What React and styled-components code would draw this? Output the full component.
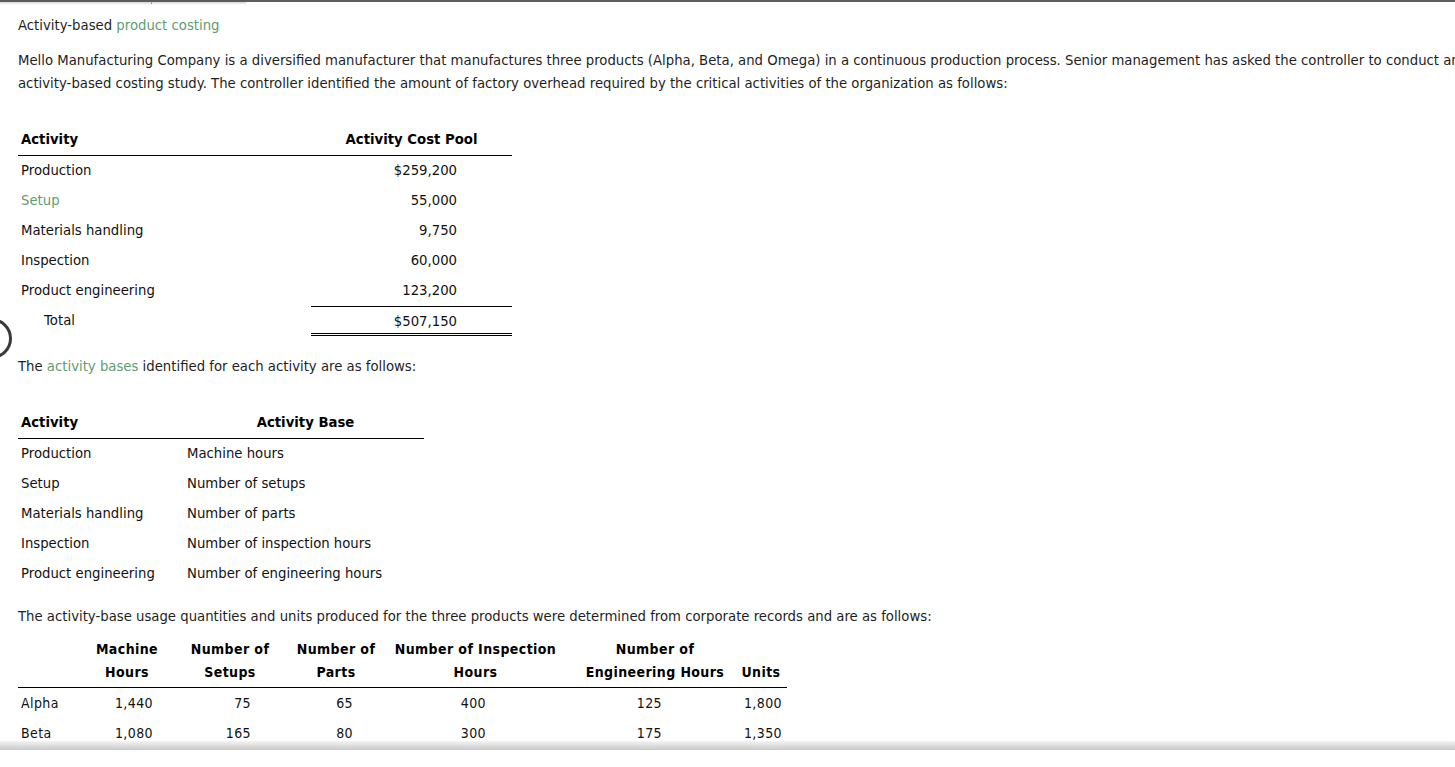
import React from 'react';
import styled, { createGlobalStyle } from 'styled-components';

const GlobalStyle = createGlobalStyle`
  html, body {
    margin: 0;
    padding: 0;
    background: #fff;
    overflow: hidden;
  }
  body {
    font-family: "DejaVu Sans", Verdana, sans-serif;
    font-size: 13.25px;
    color: #1e1e1e;
  }
`;

const Frame = styled.div`
  position: relative;
  width: 1455px;
  height: 767px;
  overflow: hidden;
  background: #fff;
`;

const TopBar = styled.div`
  height: 2px;
  background: #5c5c5c;
  position: relative;
  &::after {
    content: '';
    position: absolute;
    left: 0;
    top: 2px;
    width: 246px;
    height: 3px;
    background: linear-gradient(#d6d6d6, rgba(255, 255, 255, 0));
  }
  &::before {
    content: '';
    position: absolute;
    left: 151px;
    top: 2px;
    width: 1px;
    height: 2px;
    background: #333;
  }
`;

const Viewport = styled.div`
  height: 739px;
  overflow: hidden;
  padding: 12px 0 0 18px;
  box-sizing: border-box;
`;

const BottomShade = styled.div`
  height: 9px;
  background: linear-gradient(#f4f4f4, #c8c8c8);
`;

const Circle = styled.div`
  position: absolute;
  left: -29px;
  top: 318px;
  width: 35px;
  height: 35px;
  border: 3px solid #3a3a3a;
  border-radius: 50%;
`;

const Line = styled.div`
  line-height: 23px;
  white-space: nowrap;
  margin-top: ${(p) => p.gap || 0}px;
`;

const Link = styled.span`
  color: #5f9c70;
`;

const Table = styled.div`
  display: grid;
  grid-template-columns: ${(p) => p.cols};
  width: max-content;
  margin-top: ${(p) => p.gap || 0}px;
  color: #111;
  font-family: ${(p) => (p.narrow ? '"DejaVu Sans Condensed", "DejaVu Sans", sans-serif' : 'inherit')};
  font-size: ${(p) => (p.narrow ? '14px' : 'inherit')};
  letter-spacing: ${(p) => (p.narrow ? '0.4px' : 'normal')};
`;

const Head = styled.div`
  font-weight: bold;
  color: #000;
  height: ${(p) => p.h || 30}px;
  line-height: ${(p) => (p.h ? '23px' : '30px')};
  padding: 0 3px;
  text-align: ${(p) => (p.center ? 'center' : 'left')};
  border-bottom: 1px solid #000;
  display: flex;
  flex-direction: column;
  justify-content: flex-end;
  align-items: ${(p) => (p.center ? 'center' : 'flex-start')};
  padding-bottom: ${(p) => (p.h ? 3 : 0)}px;
  white-space: nowrap;
`;

const Cell = styled.div`
  height: 30px;
  line-height: 30px;
  white-space: nowrap;
  padding-left: ${(p) => p.pl ?? 3}px;
  padding-right: ${(p) => p.pr || 0}px;
  text-align: ${(p) => (p.right ? 'right' : 'left')};
  color: ${(p) => (p.green ? '#5f9c70' : 'inherit')};
  border-top: ${(p) => (p.top ? '1px solid #000' : 'none')};
  border-bottom: ${(p) => (p.double ? '3px double #000' : 'none')};
  box-sizing: border-box;
`;

const costRows = [
  ['Production', '$259,200'],
  ['Setup', '55,000', true],
  ['Materials handling', '9,750'],
  ['Inspection', '60,000'],
  ['Product engineering', '123,200'],
];

const baseRows = [
  ['Production', 'Machine hours'],
  ['Setup', 'Number of setups'],
  ['Materials handling', 'Number of parts'],
  ['Inspection', 'Number of inspection hours'],
  ['Product engineering', 'Number of engineering hours'],
];

const usageHeads = [
  ['Machine', 'Hours'],
  ['Number of', 'Setups'],
  ['Number of', 'Parts'],
  ['Number of Inspection', 'Hours'],
  ['Number of', 'Engineering Hours'],
  ['', 'Units'],
];

const usagePad = [11, 45, 23, 89, 73, 5];

const usageRows = [
  ['Alpha', '1,440', '75', '65', '400', '125', '1,800'],
  ['Beta', '1,080', '165', '80', '300', '175', '1,350'],
];

export default function App() {
  return (
    <Frame>
      <GlobalStyle />
      <TopBar />
      <Circle />
      <Viewport>
        <Line>
          Activity-based <Link>product costing</Link>
        </Line>
        <Line gap={12}>
          Mello Manufacturing Company is a diversified manufacturer that manufactures three products (Alpha, Beta, and Omega) in a continuous production process. Senior management has asked the controller to conduct an
        </Line>
        <Line>
          activity-based costing study. The controller identified the amount of factory overhead required by the critical activities of the organization as follows:
        </Line>

        <Table cols="293px 201px" gap={30}>
          <Head>Activity</Head>
          <Head center>Activity Cost Pool</Head>
          {costRows.map(([name, amount, green]) => (
            <React.Fragment key={name}>
              <Cell green={green}>{name}</Cell>
              <Cell right pr={55}>{amount}</Cell>
            </React.Fragment>
          ))}
          <Cell pl={26}>Total</Cell>
          <Cell right pr={55} top double>$507,150</Cell>
        </Table>

        <Line gap={19}>
          The <Link>activity bases</Link> identified for each activity are as follows:
        </Line>

        <Table cols="169px 237px" gap={30}>
          <Head>Activity</Head>
          <Head center>Activity Base</Head>
          {baseRows.map(([name, base]) => (
            <React.Fragment key={name}>
              <Cell>{name}</Cell>
              <Cell pl={0}>{base}</Cell>
            </React.Fragment>
          ))}
        </Table>

        <Line gap={16}>
          The activity-base usage quantities and units produced for the three products were determined from corporate records and are as follows:
        </Line>

        <Table narrow cols="72px 74px 132px 80px 199px 160px 52px" gap={8}>
          <Head h={48} />
          {usageHeads.map(([a, b], i) => (
            <Head h={48} center key={i}>
              <span>{a || '\u00a0'}</span>
              <span>{b}</span>
            </Head>
          ))}
          {usageRows.map((row) => (
            <React.Fragment key={row[0]}>
              <Cell>{row[0]}</Cell>
              {row.slice(1).map((v, i) => (
                <Cell right pr={usagePad[i]} key={i}>{v}</Cell>
              ))}
            </React.Fragment>
          ))}
        </Table>
      </Viewport>
      <BottomShade />
    </Frame>
  );
}
